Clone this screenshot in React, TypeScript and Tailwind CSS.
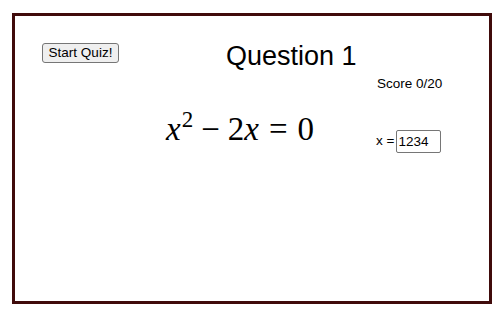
export default function App() {
  return (
    <div className="w-[497px] h-[309px] bg-white pt-[13px] pl-[12px] font-['Liberation_Sans',Arial,sans-serif] text-black">
      <div className="w-[480px] h-[291px] border-[3px] border-[#400b0b] flex flex-col">
        {/* header row */}
        <div className="flex items-start pt-[27px]">
          <button className="ml-[27px] w-[77px] h-[20px] bg-[#efefef] border border-[#767676] rounded-[3px] text-[13.5px] leading-none">
            Start Quiz!
          </button>
          <h1 className="ml-[107px] text-[27px] leading-none">Question 1</h1>
        </div>

        {/* score */}
        <div className="mt-[7px] ml-[362px] text-[13.5px] leading-none">Score 0/20</div>

        {/* equation + answer */}
        <div className="flex items-start mt-[17px]">
          <div className="ml-[151px] w-[210px] font-['Liberation_Serif','Times_New_Roman',serif] text-[33px] leading-none whitespace-nowrap">
            <span className="italic">x</span>
            <span className="text-[23px] align-[13px] ml-[1px]">2</span>
            <span className="mx-[8px]">−</span>
            <span>2</span>
            <span className="italic">x</span>
            <span className="mx-[10px]">=</span>
            <span>0</span>
          </div>
          <div className="flex items-center mt-[22px]">
            <span className="text-[13.5px]">x =</span>
            <input
              defaultValue="1234"
              className="ml-[2px] w-[45px] h-[23px] border border-[#767676] rounded-[2px] px-[1px] text-[13.5px] outline-none"
            />
          </div>
        </div>
      </div>
    </div>
  )
}
